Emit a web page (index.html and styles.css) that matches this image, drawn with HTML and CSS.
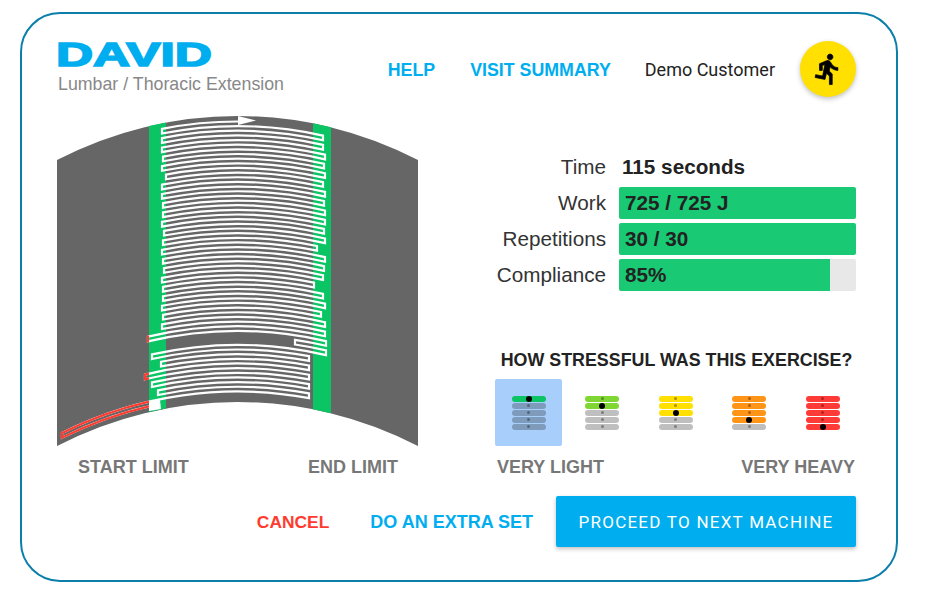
FILE: index.html
```html
<!DOCTYPE html>
<html lang="en">
<head>
    <meta charset="UTF-8">
    <title>DAVID | Lumbar / Thoracic Extension</title>
    <link rel="stylesheet" href="styles.css">
</head>
<body>
    <div class="frame">
        <header class="topbar">
            <div class="brand">
                <div class="logo">DAVID</div>
                <div class="machine">Lumbar / Thoracic Extension</div>
            </div>
            <nav class="navbtn">
                <a href="#">HELP</a>
                <a href="#">VISIT SUMMARY</a>
                <span class="customer">Demo Customer</span>
                <div class="avatar">
                    <svg viewBox="0 0 24 24" width="34" height="34">
                        <path stroke="#000000" stroke-width="0.5" d="M13.49 5.48c1.1 0 2-.9 2-2s-.9-2-2-2-2 .9-2 2 .9 2 2 2zm-3.6 13.9l1-4.4 2.1 2v6h2v-7.5l-2.1-2 .6-3c1.3 1.5 3.3 2.5 5.5 2.5v-2c-1.9 0-3.5-1-4.3-2.4l-1-1.6c-.4-.6-1-1-1.7-1-.3 0-.5.1-.8.1l-5.2 2.2v4.7h2v-3.4l1.8-.7-1.6 8.1-4.9-1-.4 2 7 1.4z"/>
                    </svg>
                </div>
            </nav>
        </header>

        <main class="content">
            <section class="chart">
                <svg class="chart-svg" viewBox="57 116 361 330" width="361" height="330">
                    <defs>
                        <clipPath id="outside-green"><rect x="0" y="0" width="149" height="500"/></clipPath>
                    </defs>
                    <path id="band" fill="#666666"/>
                    <path id="green-left" fill="#0bc464"/>
                    <path id="green-right" fill="#0bc464"/>
                    <polygon points="149,402 160,400 161,409 149,411" fill="#ffffff"/>
                    <path id="trace" class="trace"/>
                    <path id="trace-red" class="trace trace-red" clip-path="url(#outside-green)"/>
                    <polygon points="238,116 256,120.5 238,125" fill="#ffffff"/>
                </svg>
                <div class="limits">
                    <span>START LIMIT</span>
                    <span>END LIMIT</span>
                </div>
            </section>

            <section class="results">
                <div class="stats">
                    <div class="stat">
                        <div class="stat-label">Time</div>
                        <div class="stat-plain">115 seconds</div>
                    </div>
                    <div class="stat">
                        <div class="stat-label">Work</div>
                        <div class="meter">
                            <div class="meter-fill" style="width: 100%">725 / 725 J</div>
                        </div>
                    </div>
                    <div class="stat">
                        <div class="stat-label">Repetitions</div>
                        <div class="meter">
                            <div class="meter-fill" style="width: 100%">30 / 30</div>
                        </div>
                    </div>
                    <div class="stat">
                        <div class="stat-label">Compliance</div>
                        <div class="meter">
                            <div class="meter-fill" style="width: 89%">85%</div>
                        </div>
                    </div>
                </div>

                <h2 class="question">HOW STRESSFUL WAS THIS EXERCISE?</h2>
                <div class="levels">
                    <div class="level level-1 selected">
                        <span class="on mark"></span><span></span><span></span><span></span><span></span>
                    </div>
                    <div class="level level-2">
                        <span class="on"></span><span class="on mark"></span><span></span><span></span><span></span>
                    </div>
                    <div class="level level-3">
                        <span class="on"></span><span class="on"></span><span class="on mark"></span><span></span><span></span>
                    </div>
                    <div class="level level-4">
                        <span class="on"></span><span class="on"></span><span class="on"></span><span class="on mark"></span><span></span>
                    </div>
                    <div class="level level-5">
                        <span class="on"></span><span class="on"></span><span class="on"></span><span class="on"></span><span class="on mark"></span>
                    </div>
                </div>
                <div class="scale">
                    <span>VERY LIGHT</span>
                    <span>VERY HEAVY</span>
                </div>
            </section>
        </main>

        <footer class="actions">
            <a href="#" class="cancel">CANCEL</a>
            <a href="#" class="extra">DO AN EXTRA SET</a>
            <button class="proceed">PROCEED TO NEXT MACHINE</button>
        </footer>
    </div>

    <script src="chart.js"></script>
</body>
</html>
```

FILE: styles.css
```css
body {
    margin: 0;
    padding: 0;
    background: #ffffff;
    font-family: "Liberation Sans", Arial, sans-serif;
    color: #222222;
}
a {
    text-decoration: none;
}

.frame {
    box-sizing: border-box;
    width: 878px;
    height: 570px;
    margin: 12px 0 0 20px;
    padding: 27px 40px 0 35px;
    border: 2px solid #0b7fa9;
    border-radius: 40px;
}

.topbar {
    display: flex;
    justify-content: space-between;
    align-items: center;
    height: 56px;
}
.logo {
    height: 27px;
    margin: -3px 0 0 -1px;
    font-size: 34px;
    line-height: 27px;
    font-weight: bold;
    color: #00aeef;
    -webkit-text-stroke: 1.6px #00aeef;
    transform: scaleX(1.51);
    transform-origin: left center;
}
.machine {
    margin: 6px 0 0 1px;
    font-size: 17.8px;
    color: #888888;
}
.navbtn {
    display: flex;
    align-items: center;
}
.navbtn a {
    margin: 2px 35px 0 0;
    font-size: 17.8px;
    font-weight: bold;
    color: #00aeef;
}
.customer {
    margin: 1px 25px 0 -1px;
    font-family: Roboto, sans-serif;
    font-size: 18px;
    color: #222222;
}
.avatar {
    display: flex;
    justify-content: center;
    align-items: center;
    width: 56px;
    height: 56px;
    border-radius: 50%;
    background: #ffe000;
    box-shadow: 0 2px 5px rgba(0, 0, 0, 0.25);
}

.content {
    display: flex;
    justify-content: space-between;
    margin-top: 19px;
}
.chart {
    width: 361px;
}
.chart-svg {
    display: block;
}
.trace {
    fill: none;
    stroke: #ffffff;
    stroke-width: 2.2;
}
.trace-red {
    stroke: #ff3b30;
}
.limits {
    display: flex;
    justify-content: space-between;
    margin-top: 11px;
    padding: 0 20px 0 21px;
    font-size: 18px;
    font-weight: bold;
    color: #777777;
}

.results {
    width: 361px;
    padding-top: 35px;
}
.stats {
    display: flex;
    flex-direction: column;
    gap: 4px;
}
.stat {
    display: flex;
    align-items: center;
    height: 32px;
    font-size: 20.7px;
}
.stat-label {
    width: 111px;
    margin-right: 13px;
    text-align: right;
    color: #333333;
}
.stat-plain {
    padding-left: 3px;
    font-weight: bold;
}
.meter {
    flex: 1;
    height: 32px;
    border-radius: 2px;
    background: #e8e8e8;
    overflow: hidden;
}
.meter-fill {
    box-sizing: border-box;
    height: 100%;
    padding-left: 6px;
    line-height: 32px;
    font-weight: bold;
    background: #19c974;
}

.question {
    margin: 59px 0 9px 0;
    padding-left: 2px;
    font-size: 17.85px;
    line-height: 20px;
    text-align: center;
    color: #222222;
}
.levels {
    display: flex;
    justify-content: space-between;
}
.level {
    display: flex;
    flex-direction: column;
    justify-content: center;
    align-items: center;
    gap: 1px;
    width: 67px;
    height: 67px;
    border-radius: 2px;
}
.level.selected {
    background: #a8cffb;
}
.level span {
    position: relative;
    width: 34px;
    height: 6px;
    border-radius: 3px;
    background: rgba(0, 0, 0, 0.25);
}
.level span::after {
    content: "";
    position: absolute;
    left: 15.5px;
    top: 1.5px;
    width: 3px;
    height: 3px;
    border-radius: 50%;
    background: rgba(0, 0, 0, 0.35);
}
.level span.mark::after {
    left: 14px;
    top: 0;
    width: 6px;
    height: 6px;
    background: #000000;
}
.level-1 .on { background: #0bc464; }
.level-2 .on { background: #80d633; }
.level-3 .on { background: #ffe000; }
.level-4 .on { background: #ff9416; }
.level-5 .on { background: #ff3b38; }
.scale {
    display: flex;
    justify-content: space-between;
    margin-top: 11px;
    padding: 0 1px 0 2px;
    font-size: 18px;
    font-weight: bold;
    color: #777777;
}

.actions {
    display: flex;
    justify-content: flex-end;
    align-items: center;
    margin-top: 18px;
}
.actions a {
    margin-top: 1px;
    font-weight: bold;
}
.cancel {
    margin-right: 41px;
    font-size: 17.4px;
    color: #ff3b30;
}
.extra {
    margin-right: 23px;
    font-size: 18px;
    color: #00aeef;
}
.proceed {
    width: 300px;
    height: 51px;
    border: none;
    border-radius: 2px;
    background: #00aeef;
    color: #ffffff;
    font-family: Roboto, sans-serif;
    font-size: 17px;
    letter-spacing: 1.25px;
    box-shadow: 0 2px 4px rgba(0, 0, 0, 0.25);
}
```

FILE: chart.js
```js
// range of motion chart: every rep is drawn as a serpentine along the arch
const R = 392;
const CX = 237.5;
const STEP = 4.655;
const FIRST_LINE = 121.5;

function arcY(top, x) {
    return top + R - Math.sqrt(R * R - (x - CX) * (x - CX));
}

function lineY(i, x) {
    return arcY(FIRST_LINE + STEP * i, x);
}

// turning points per pair of lines, measured from the top
const leftTurns = [
    162, 162, 162, 163, 162, 166, 162, 162, 163, 163, 162, 164,
    163, 162, 163, 164, 162, 163, 163, 162, 163, 162, 148,
    295, 152, 161, 145, 152, 158
];
const rightTurns = [
    323, 323, 325, 324, 325, 323, 325, 324, 325, 325, 324, 325,
    317, 325, 324, 323, 314, 323, 325, 321, 325, 325, 326,
    326, 309, 309, 309, 309, 309
];

function buildTrace() {
    let i = 0;
    let d = `M 240 ${lineY(0, 240)}`;
    for (let t = 0; t < leftTurns.length; t++) {
        const l = leftTurns[t];
        const r = rightTurns[t];
        d += ` A ${R} ${R} 0 0 0 ${l} ${lineY(i, l)}`;
        d += ` L ${l} ${lineY(i + 1, l)}`;
        d += ` A ${R} ${R} 0 0 1 ${r} ${lineY(i + 1, r)}`;
        d += ` L ${r} ${lineY(i + 2, r)}`;
        i += 2;
    }
    // last rep runs past the start limit
    d += ` A ${R} ${R} 0 0 0 62 ${lineY(i, 62)}`;
    d += ` L 62 ${lineY(i + 1, 62)}`;
    d += ` A ${R} ${R} 0 0 1 160 ${lineY(i + 1, 160)}`;
    return d;
}

function bandPath(x1, x2) {
    return `M ${x1} ${arcY(116, x1)} A ${R} ${R} 0 0 1 ${x2} ${arcY(116, x2)}` +
        ` L ${x2} ${arcY(402, x2)} A ${R} ${R} 0 0 0 ${x1} ${arcY(402, x1)} Z`;
}

const trace = buildTrace();
document.getElementById("band").setAttribute("d", bandPath(57, 418));
document.getElementById("green-left").setAttribute("d", bandPath(149, 166));
document.getElementById("green-right").setAttribute("d", bandPath(313, 331));
document.getElementById("trace").setAttribute("d", trace);
document.getElementById("trace-red").setAttribute("d", trace);
```
